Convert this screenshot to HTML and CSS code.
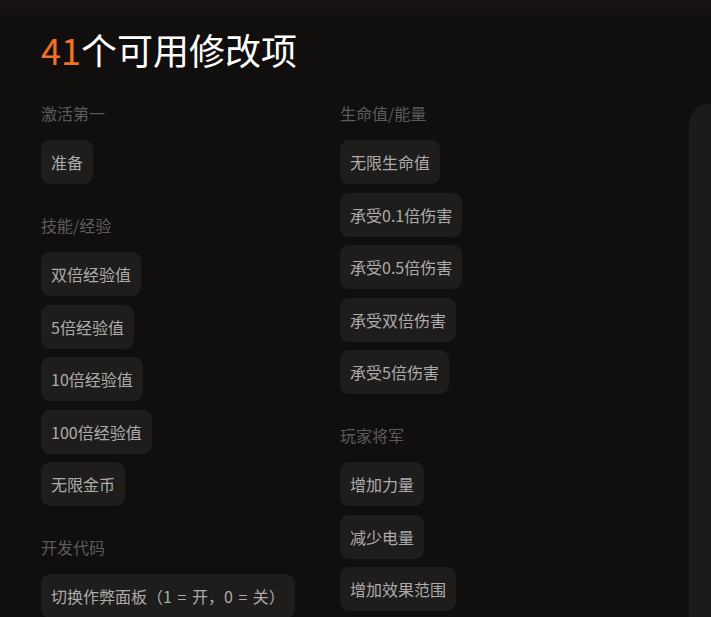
FILE: index.html
```html
<!DOCTYPE html>
<html lang="zh-CN">
<head>
<meta charset="utf-8">
<title>41个可用修改项</title>
<link rel="stylesheet" href="styles.css">
</head>
<body>
<div class="page">
  <main class="main">
    <h1 class="title"><span class="count">41</span>个可用修改项</h1>
    <div class="cols">
      <div class="col">
        <section class="group">
          <div class="label">激活第一</div>
          <div class="items">
            <button class="item">准备</button>
          </div>
        </section>
        <section class="group">
          <div class="label">技能/经验</div>
          <div class="items">
            <button class="item">双倍经验值</button>
            <button class="item">5倍经验值</button>
            <button class="item">10倍经验值</button>
            <button class="item">100倍经验值</button>
            <button class="item">无限金币</button>
          </div>
        </section>
        <section class="group">
          <div class="label">开发代码</div>
          <div class="items">
            <button class="item item-wide">切换作弊面板（1 = 开，0 = 关）</button>
          </div>
        </section>
      </div>
      <div class="col">
        <section class="group">
          <div class="label">生命值/能量</div>
          <div class="items">
            <button class="item">无限生命值</button>
            <button class="item">承受0.1倍伤害</button>
            <button class="item">承受0.5倍伤害</button>
            <button class="item">承受双倍伤害</button>
            <button class="item">承受5倍伤害</button>
          </div>
        </section>
        <section class="group">
          <div class="label">玩家将军</div>
          <div class="items">
            <button class="item">增加力量</button>
            <button class="item">减少电量</button>
            <button class="item">增加效果范围</button>
          </div>
        </section>
      </div>
    </div>
  </main>
  <aside class="side"></aside>
</div>
</body>
</html>
```

FILE: styles.css
```css
html, body {
  margin: 0;
  padding: 0;
  height: 100%;
}
body {
  background: linear-gradient(to bottom, #161312 0px, #110f0e 18px, #110f0e 100%);
  font-family: "Noto Sans CJK SC", "Noto Sans", sans-serif;
  color: #aaa9a8;
  overflow: hidden;
}
.page {
  display: flex;
  height: 617px;
}
.main {
  width: 689px;
  flex: 0 0 689px;
  padding: 27px 0 0 41px;
  box-sizing: border-box;
}
.title {
  margin: 0 0 30px;
  font-size: 36px;
  line-height: 44px;
  font-weight: 400;
  color: #ffffff;
  letter-spacing: 0;
}
.count {
  color: #f07125;
}
.cols {
  display: grid;
  grid-template-columns: 299px 299px;
}
.col {
  display: flex;
  flex-direction: column;
  gap: 29px;
}
.label {
  font-size: 16px;
  line-height: 24px;
  color: #5c5b5a;
  margin-bottom: 15px;
}
.items {
  display: flex;
  flex-direction: column;
  align-items: flex-start;
  gap: 8.5px;
}
.item {
  background: #1e1d1c;
  border: none;
  border-radius: 9px;
  padding: 10px 10px;
  font-family: inherit;
  font-size: 16px;
  line-height: 24px;
  color: #acabaa;
  text-align: left;
  white-space: nowrap;
}
.item-wide {
  word-spacing: 2px;
}
.side {
  flex: 1;
  margin-top: 103px;
  background: #1c1b1a;
  border-top-left-radius: 24px;
}
```
